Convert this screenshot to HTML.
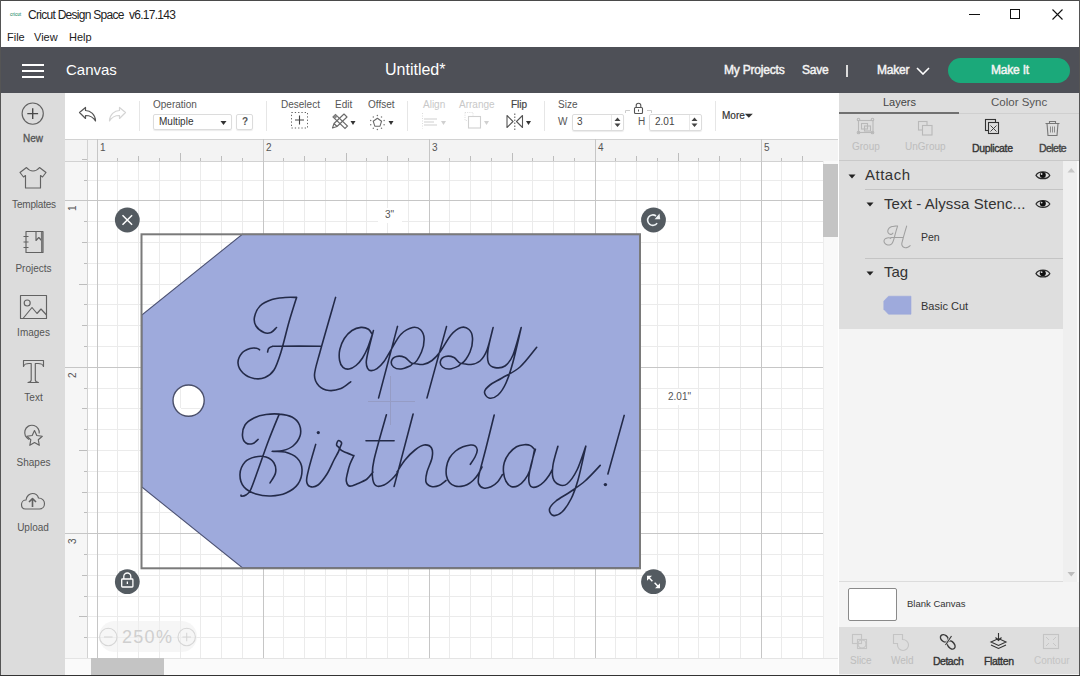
<!DOCTYPE html>
<html><head><meta charset="utf-8">
<style>
*{box-sizing:border-box;margin:0;padding:0}
html,body{width:1080px;height:676px;overflow:hidden;background:#fff;font-family:"Liberation Sans",sans-serif;position:relative}
.a{position:absolute}
.t{position:absolute;white-space:nowrap;line-height:1}
</style></head><body>
<!-- title bar -->
<svg class="a" style="left:8px;top:10px" width="16" height="8" viewBox="0 0 16 8"><text x="2" y="5.8" font-family="Liberation Sans" font-size="5.2" font-weight="bold" fill="#4a9e84" textLength="11" lengthAdjust="spacingAndGlyphs">cricut</text></svg>
<div class="t" id="ttl" style="left:28px;top:8.5px;font-size:12px;color:#222;letter-spacing:-0.72px">Cricut Design Space&nbsp; v6.17.143</div>
<div class="t" style="left:7px;top:32px;font-size:11px;color:#222">File</div>
<div class="t" style="left:34px;top:32px;font-size:11px;color:#222">View</div>
<div class="t" style="left:69px;top:32px;font-size:11px;color:#222">Help</div>
<div class="a" style="left:969px;top:14px;width:11px;height:1px;background:#111"></div>
<div class="a" style="left:1010px;top:9px;width:10px;height:10px;border:1px solid #111"></div>
<svg class="a" style="left:1052px;top:9px" width="11" height="11" viewBox="0 0 11 11"><path d="M0.5 0.5L10.5 10.5M10.5 0.5L0.5 10.5" stroke="#111" stroke-width="1.1"/></svg>

<!-- header -->
<div class="a" style="left:1px;top:47px;width:1078px;height:46px;background:#4e5057"></div>
<div class="a" style="left:22px;top:64px;width:22px;height:2px;background:#fff"></div>
<div class="a" style="left:22px;top:70px;width:22px;height:2px;background:#fff"></div>
<div class="a" style="left:22px;top:76px;width:22px;height:2px;background:#fff"></div>
<div class="t" style="left:66px;top:62px;font-size:15px;color:#fff">Canvas</div>
<div class="t" style="left:385px;top:62px;font-size:16px;color:#fff">Untitled*</div>
<div class="t" style="left:724px;top:64px;font-size:12px;color:#f4f4f4;-webkit-text-stroke:0.45px #f4f4f4;letter-spacing:-0.2px">My Projects</div>
<div class="t" style="left:802px;top:64px;font-size:12px;color:#f4f4f4;-webkit-text-stroke:0.45px #f4f4f4;letter-spacing:-0.2px">Save</div>
<div class="a" style="left:846px;top:65px;width:2px;height:12px;background:#dcdcdc"></div>
<div class="t" style="left:877px;top:64px;font-size:12px;color:#f4f4f4;-webkit-text-stroke:0.45px #f4f4f4;letter-spacing:-0.2px">Maker</div>
<svg class="a" style="left:916px;top:67px" width="14" height="8" viewBox="0 0 14 8"><path d="M1 1L7 7L13 1" stroke="#fff" stroke-width="1.6" fill="none"/></svg>
<div class="a" style="left:948px;top:58px;width:122px;height:25px;border-radius:12.5px;background:#1ba97a"></div>
<div class="t" style="left:991px;top:64px;font-size:12px;color:#f4f4f4;-webkit-text-stroke:0.45px #f4f4f4;letter-spacing:-0.2px">Make It</div>

<!-- sidebar -->
<div class="a" style="left:1px;top:93px;width:64px;height:583px;background:#dcdcdc"></div>
<svg class="a" style="left:0;top:93px" width="65" height="450" viewBox="0 93 65 450" fill="none" stroke="#626262" stroke-width="1.15" stroke-linejoin="round">
<circle cx="32.7" cy="113.6" r="10.6"/>
<path d="M32.7 108.2V119M27.3 113.6H38.1" stroke="#4a4a4a" stroke-width="1.4"/>
<path d="M20 172.5L26.5 167.5C28.5 170 31 171 33 171C35 171 37.5 170 39.5 167.5L46 172.5L42.5 177L40.5 175.5V188H25.5V175.5L23.5 177Z"/>
<rect x="26" y="231.5" width="17" height="21"/>
<path d="M23.5 236.5H28.5M23.5 242H28.5M23.5 247.5H28.5"/>
<path d="M36 231.5V240.5L38.8 237.5L41.5 240.5V231.5" />
<rect x="41" y="232" width="1.8" height="20" fill="#777" stroke="none"/>
<rect x="20.5" y="295.5" width="26" height="23"/>
<circle cx="27.2" cy="303" r="3"/>
<path d="M23 318.5L32 307.5L37 313.5L41 309L46.5 315"/>
<path d="M23.5 360.5H43.5V366.5C42.5 364 41.5 363.5 38 363.5H35.3V380C35.3 381.5 36 382 38.5 382.5H28C30.5 382 31.2 381.5 31.2 380V363.5H29C25.5 363.5 24.5 364 23.5 366.5Z"/>
<path d="M29 439.5C25.5 437.5 24.2 434 25 430.5C26 426.5 30 424.5 34 425.5C37.5 426.5 39.8 430 39.2 433.5"/>
<path d="M34.5 430.5L36.8 435.5L42.3 436.2L38.3 439.8L39.3 445.3L34.5 442.6L29.8 445.3L30.8 439.8L26.7 436.2L32.2 435.5Z"/>
<path d="M25.5 509C22.5 509 21.5 506.5 21.5 504.5C21.5 502 23.5 500 26 500C26.5 496 29.5 493.5 32.5 493.5C35.5 493.5 37.8 495.5 38.5 498C42 498 44.5 500.5 44.5 503.5C44.5 506.5 42.5 509 39.5 509Z"/>
<path d="M32.5 507V498.5M29 502L32.5 498.5L36 502" stroke-width="1.6"/>
</svg>
<div class="t" style="left:33px;top:134px;font-size:10px;color:#555;-webkit-text-stroke:0.3px #555;transform:translateX(-50%)">New</div>
<div class="t" style="left:34px;top:200px;font-size:10px;color:#555;letter-spacing:-0.2px;transform:translateX(-50%)">Templates</div>
<div class="t" style="left:33.5px;top:264px;font-size:10px;color:#555;transform:translateX(-50%)">Projects</div>
<div class="t" style="left:33.5px;top:328px;font-size:10px;color:#555;transform:translateX(-50%)">Images</div>
<div class="t" style="left:33.5px;top:393px;font-size:10px;color:#555;transform:translateX(-50%)">Text</div>
<div class="t" style="left:33.5px;top:458px;font-size:10px;color:#555;transform:translateX(-50%)">Shapes</div>
<div class="t" style="left:33px;top:522.5px;font-size:10px;color:#555;transform:translateX(-50%)">Upload</div>

<!-- toolbar -->
<div class="a" style="left:65px;top:93px;width:774px;height:46px;background:#fff"></div>
<svg class="a" style="left:70px;top:100px" width="70" height="30" viewBox="70 100 70 30">
<path d="M79.5 112.5L85.5 107.5V110.5C90.5 110.5 95.5 114.5 95.5 121C93.5 117.5 90 115.5 85.5 115.5V118.5Z" fill="none" stroke="#555" stroke-width="1.2" stroke-linejoin="round"/>
<path d="M125.5 112.5L119.5 107.5V110.5C114.5 110.5 109.5 114.5 109.5 121C111.5 117.5 115 115.5 119.5 115.5V118.5Z" fill="none" stroke="#d4d4d4" stroke-width="1.2" stroke-linejoin="round"/>
</svg>
<div class="a" style="left:139px;top:101px;width:1px;height:30px;background:#e6e6e6"></div>
<div class="t" style="left:153px;top:100px;font-size:10px;color:#555">Operation</div>
<div class="a" style="left:153px;top:114px;width:79px;height:16px;border:1px solid #dcdcdc;border-radius:2px;box-shadow:0 1px 1px rgba(0,0,0,.08)"></div>
<div class="t" style="left:159px;top:117px;font-size:10px;color:#333">Multiple</div>
<svg class="a" style="left:220px;top:120px" width="7" height="6" viewBox="0 0 7 6"><path d="M0.5 1H6.5L3.5 5Z" fill="#333"/></svg>
<div class="a" style="left:236px;top:114px;width:17px;height:16px;border:1px solid #dcdcdc;border-radius:2px;box-shadow:0 1px 1px rgba(0,0,0,.08)"></div>
<div class="t" style="left:242px;top:117px;font-size:10px;color:#555;font-weight:bold">?</div>
<div class="a" style="left:266px;top:101px;width:1px;height:30px;background:#e6e6e6"></div>

<div class="t" style="left:281px;top:100px;font-size:10px;color:#555">Deselect</div>
<svg class="a" style="left:289px;top:110px" width="22" height="20" viewBox="289 110 22 20">
<rect x="291.5" y="112.5" width="16" height="15.5" fill="none" stroke="#666" stroke-width="1" stroke-dasharray="1.3 2"/>
<path d="M299.5 115.5V124.5M295 120H304" stroke="#444" stroke-width="1.1"/>
</svg>
<div class="t" style="left:335px;top:100px;font-size:10px;color:#555">Edit</div>
<svg class="a" style="left:330px;top:111px" width="28" height="20" viewBox="330 111 28 20">
<path d="M332.5 128L334 123.5L344 114L347 117L337 126.5Z M334 123.5L337 126.5" fill="none" stroke="#6a6a6a" stroke-width="1.1" stroke-linejoin="round"/>
<path d="M333 117L335.5 114.5L347.5 126L345 128.5Z" fill="none" stroke="#6a6a6a" stroke-width="1.1"/><path d="M333.2 116.8L335.5 114.5L337.5 116.5L335.2 118.8Z" fill="#8a8a8a"/>
<path d="M350.5 121H355.5L353 125Z" fill="#333"/>
</svg>
<div class="t" style="left:368px;top:100px;font-size:10px;color:#555">Offset</div>
<svg class="a" style="left:368px;top:112px" width="28" height="20" viewBox="368 112 28 20">
<path d="M377.4 118.2L381.6 121.2L380.0 126.2L374.8 126.2L373.2 121.2Z" fill="none" stroke="#6a6a6a" stroke-width="1.1" stroke-linejoin="round"/>
<circle cx="377.4" cy="115.6" r="0.75" fill="#777"/><circle cx="381.5" cy="116.9" r="0.75" fill="#777"/><circle cx="384.1" cy="120.4" r="0.75" fill="#777"/><circle cx="384.1" cy="124.8" r="0.75" fill="#777"/><circle cx="381.5" cy="128.3" r="0.75" fill="#777"/><circle cx="377.4" cy="129.6" r="0.75" fill="#777"/><circle cx="373.3" cy="128.3" r="0.75" fill="#777"/><circle cx="370.7" cy="124.8" r="0.75" fill="#777"/><circle cx="370.7" cy="120.4" r="0.75" fill="#777"/><circle cx="373.3" cy="116.9" r="0.75" fill="#777"/>
<path d="M388.5 121H393.5L391 125Z" fill="#333"/>
</svg>
<div class="a" style="left:407px;top:101px;width:1px;height:30px;background:#e6e6e6"></div>

<div class="t" style="left:423px;top:100px;font-size:10px;color:#c8c8c8">Align</div>
<svg class="a" style="left:420px;top:111px" width="28" height="20" viewBox="420 111 28 20">
<path d="M422.5 113V128.5" stroke="#ddd" stroke-width="1" stroke-dasharray="1 1.5"/>
<path d="M424 119H437M424 122H434M424 125H437" stroke="#d0d0d0" stroke-width="1.2"/>
<path d="M441 121H446L443.5 125Z" fill="#d0d0d0"/>
</svg>
<div class="t" style="left:459px;top:100px;font-size:10px;color:#c8c8c8">Arrange</div>
<svg class="a" style="left:462px;top:110px" width="30" height="20" viewBox="462 110 30 20">
<path d="M465 112.5H473V116M465 112.5V120.5H468" fill="none" stroke="#ddd" stroke-width="1" stroke-dasharray="1 1.2"/>
<rect x="468.5" y="116.5" width="12" height="11.5" fill="none" stroke="#d0d0d0" stroke-width="1.1"/>
<path d="M484 121H489L486.5 125Z" fill="#d0d0d0"/>
</svg>
<div class="t" style="left:511px;top:100px;font-size:10px;color:#444;-webkit-text-stroke:0.2px #444">Flip</div>
<svg class="a" style="left:504px;top:111px" width="30" height="21" viewBox="504 111 30 21">
<path d="M507 115.5L513 121.5L507 127.5Z M522.5 115.5L516.5 121.5L522.5 127.5Z" fill="none" stroke="#555" stroke-width="1.1" stroke-linejoin="round"/>
<path d="M514.8 113.5V130" stroke="#555" stroke-width="1" stroke-dasharray="1.5 1.5"/>
<path d="M526 121H531L528.5 125Z" fill="#333"/>
</svg>
<div class="a" style="left:544px;top:101px;width:1px;height:30px;background:#e6e6e6"></div>

<div class="t" style="left:558px;top:100px;font-size:10px;color:#555">Size</div>
<div class="t" style="left:558px;top:117px;font-size:10px;color:#555">W</div>
<div class="a" style="left:572px;top:114px;width:52px;height:17px;border:1px solid #dcdcdc;border-radius:2px;box-shadow:0 1px 1px rgba(0,0,0,.08)"></div>
<div class="a" style="left:611px;top:115px;width:1px;height:15px;background:#e8e8e8"></div>
<div class="t" style="left:577px;top:117px;font-size:10px;color:#444">3</div>
<svg class="a" style="left:613px;top:116px" width="9" height="13" viewBox="0 0 9 13"><path d="M1.5 5H7.5L4.5 1.5Z M1.5 7.5H7.5L4.5 11Z" fill="#444"/></svg>
<svg class="a" style="left:624px;top:102px" width="29" height="12" viewBox="624 102 29 12">
<path d="M625.5 113V110.5H630M647 110.5H651.5V113" fill="none" stroke="#ccc" stroke-width="1"/>
<rect x="634.5" y="107.5" width="8" height="6" rx="1" fill="none" stroke="#555" stroke-width="1.1"/>
<path d="M636.2 107.5V105.5A2.3 2.3 0 0 1 640.8 105.5V107.5" fill="none" stroke="#555" stroke-width="1.1"/>
<rect x="638" y="109.5" width="1" height="2" fill="#555"/>
</svg>
<div class="t" style="left:638px;top:117px;font-size:10px;color:#555">H</div>
<div class="a" style="left:649px;top:114px;width:53px;height:17px;border:1px solid #dcdcdc;border-radius:2px;box-shadow:0 1px 1px rgba(0,0,0,.08)"></div>
<div class="a" style="left:689px;top:115px;width:1px;height:15px;background:#e8e8e8"></div>
<div class="t" style="left:655px;top:117px;font-size:10px;color:#444">2.01</div>
<svg class="a" style="left:690px;top:116px" width="9" height="13" viewBox="0 0 9 13"><path d="M1.5 5H7.5L4.5 1.5Z M1.5 7.5H7.5L4.5 11Z" fill="#444"/></svg>
<div class="a" style="left:715px;top:101px;width:1px;height:30px;background:#e6e6e6"></div>
<div class="t" style="left:722px;top:111px;font-size:10px;color:#333;-webkit-text-stroke:0.2px #333">More</div>
<svg class="a" style="left:744px;top:113px" width="10" height="6" viewBox="0 0 10 6"><path d="M0.8 0.8H8.8L4.8 4.8Z" fill="#333"/></svg>

<!-- canvas -->
<div class="a" style="left:65px;top:139px;width:774px;height:537px;background:#fff"></div>
<svg class="a" style="left:0;top:0" width="1080" height="676" viewBox="0 0 1080 676" shape-rendering="crispEdges">
<rect x="65" y="139" width="773" height="22" fill="#f3f3f3"/>
<rect x="65" y="161" width="22" height="497" fill="#f6f6f6"/>
<path d="M117.5 161V658 M138.5 161V658 M159.5 161V658 M180.5 161V658 M200.5 161V658 M221.5 161V658 M242.5 161V658 M283.5 161V658 M304.5 161V658 M325.5 161V658 M346.5 161V658 M366.5 161V658 M387.5 161V658 M408.5 161V658 M449.5 161V658 M470.5 161V658 M491.5 161V658 M512.5 161V658 M532.5 161V658 M553.5 161V658 M574.5 161V658 M615.5 161V658 M636.5 161V658 M657.5 161V658 M678.5 161V658 M698.5 161V658 M719.5 161V658 M740.5 161V658 M781.5 161V658 M802.5 161V658 M87 180.5H823 M87 221.5H823 M87 242.5H823 M87 263.5H823 M87 284.5H823 M87 304.5H823 M87 325.5H823 M87 346.5H823 M87 388.5H823 M87 408.5H823 M87 429.5H823 M87 450.5H823 M87 471.5H823 M87 492.5H823 M87 512.5H823 M87 554.5H823 M87 575.5H823 M87 596.5H823 M87 616.5H823 M87 637.5H823" stroke="#ebebeb" stroke-width="1"/>
<path d="M117.5 158V161 M138.5 156V161 M159.5 158V161 M180.5 153V161 M200.5 158V161 M221.5 156V161 M242.5 158V161 M283.5 158V161 M304.5 156V161 M325.5 158V161 M346.5 153V161 M366.5 158V161 M387.5 156V161 M408.5 158V161 M449.5 158V161 M470.5 156V161 M491.5 158V161 M512.5 153V161 M532.5 158V161 M553.5 156V161 M574.5 158V161 M615.5 158V161 M636.5 156V161 M657.5 158V161 M678.5 153V161 M698.5 158V161 M719.5 156V161 M740.5 158V161 M781.5 158V161 M802.5 156V161 M84 180.5H87 M84 221.5H87 M82 242.5H87 M84 263.5H87 M79 284.5H87 M84 304.5H87 M82 325.5H87 M84 346.5H87 M84 388.5H87 M82 408.5H87 M84 429.5H87 M79 450.5H87 M84 471.5H87 M82 492.5H87 M84 512.5H87 M84 554.5H87 M82 575.5H87 M84 596.5H87 M79 616.5H87 M84 637.5H87 M82 159.5H87" stroke="#bdbdbd" stroke-width="1"/>
<path d="M65 139.5H838M65 161.5H838M87.5 139V658" stroke="#d2d2d2" stroke-width="1"/>
<path d="M97.5 139V658 M263.5 139V658 M429.5 139V658 M595.5 139V658 M761.5 139V658 M65 200.5H823 M65 367.5H823 M65 533.5H823" stroke="#c6c6c6" stroke-width="1"/>
</svg>
<div class="t" style="left:100px;top:143px;font-size:10px;color:#555">1</div>
<div class="t" style="left:266px;top:143px;font-size:10px;color:#555">2</div>
<div class="t" style="left:432px;top:143px;font-size:10px;color:#555">3</div>
<div class="t" style="left:598px;top:143px;font-size:10px;color:#555">4</div>
<div class="t" style="left:764px;top:143px;font-size:10px;color:#555">5</div>
<div class="t" style="left:68px;top:211px;font-size:10px;color:#555;transform:rotate(-90deg);transform-origin:0 0;">1</div>
<div class="t" style="left:68px;top:378px;font-size:10px;color:#555;transform:rotate(-90deg);transform-origin:0 0;">2</div>
<div class="t" style="left:68px;top:544px;font-size:10px;color:#555;transform:rotate(-90deg);transform-origin:0 0;">3</div>

<!-- tag -->
<svg class="a" style="left:0;top:0" width="1080" height="676" viewBox="0 0 1080 676">
<path d="M242.3 234.3H640V567.7H242.3L141.8 487V315Z" fill="#9eaadc" stroke="#4d5374" stroke-width="1.1"/>
<circle cx="188.6" cy="400.6" r="15.6" fill="#fff" stroke="#4a4f6a" stroke-width="1.4"/>
<rect x="141.5" y="234.3" width="498.5" height="334" fill="none" stroke="#7a7a7a" stroke-width="2"/>
</svg>
<!-- hole grid lines (white inside hole shows grid) -->
<svg class="a" style="left:0;top:0" width="1080" height="676" viewBox="0 0 1080 676" shape-rendering="crispEdges">
<path d="M180.5 389V408M181 408.5H201" stroke="#ececec" stroke-width="1"/>
</svg>
<div class="a" style="left:378px;top:208px;width:24px;height:15px;background:#fff"></div>
<div class="t" style="left:385px;top:210px;font-size:10px;color:#555">3"</div>
<div class="a" style="left:661px;top:389px;width:36px;height:16px;background:#fff"></div>
<div class="t" style="left:668px;top:392px;font-size:10px;color:#555">2.01"</div>
<!-- handles -->
<svg class="a" style="left:0;top:0" width="1080" height="676" viewBox="0 0 1080 676">
<circle cx="127.3" cy="220" r="12.4" fill="#545b61"/>
<path d="M122.5 215.2L132.1 224.8M132.1 215.2L122.5 224.8" stroke="#fff" stroke-width="1.5"/>
<circle cx="653.5" cy="220" r="12.4" fill="#545b61"/>
<path d="M657.1 223.1A5.2 5.2 0 1 1 656 216" fill="none" stroke="#eef2f4" stroke-width="1.6"/>
<path d="M659.5 213.6L660.2 219.3L654.6 219.3Z" fill="#eef2f4"/>
<circle cx="127.3" cy="581.7" r="12.4" fill="#545b61"/>
<rect x="121.7" y="579" width="11.2" height="8" rx="0.8" fill="none" stroke="#fff" stroke-width="1.3"/>
<path d="M123.8 579V576.5A3.5 3.5 0 0 1 130.8 576.5V579" fill="none" stroke="#fff" stroke-width="1.3"/>
<rect x="126.7" y="581.5" width="1.3" height="2.5" fill="#fff"/>
<circle cx="653.5" cy="581.7" r="12.4" fill="#545b61"/>
<path d="M648 576.7L652.4 581.2M659 587.2L654.6 582.8" stroke="#fff" stroke-width="1.5"/>
<path d="M647 575.7H652L647 580.7Z M660 588.2H655L660 583.2Z" fill="#fff"/>
</svg>

<svg class="a" style="left:0;top:0" width="1080" height="676" viewBox="0 0 1080 676" shape-rendering="crispEdges"><path d="M368 401.5H415M390.5 376V425" stroke="#8a8ca8" stroke-opacity="0.45" stroke-width="1"/></svg>
<!-- text -->
<svg class="a" style="left:0;top:0" width="1080" height="676" viewBox="0 0 1080 676"><path d="M276.5 327.5C275.6 328.3 273.1 331.7 271.0 332.5C268.9 333.3 266.5 333.6 264.0 332.5C261.5 331.4 257.6 328.6 256.0 326.0C254.4 323.4 253.8 320.3 254.5 317.0C255.2 313.7 257.1 308.9 260.0 306.0C262.9 303.1 267.8 300.9 272.0 299.5C276.2 298.1 280.9 297.9 285.0 297.5C289.1 297.1 294.7 297.4 296.6 297.4 M296.6 297.4C295.3 301.5 291.6 312.9 289.0 322.0C286.4 331.1 283.5 344.0 281.0 352.0C278.5 360.0 276.7 365.8 274.0 370.0C271.3 374.2 268.3 376.1 265.0 377.5C261.7 378.9 257.7 379.2 254.0 378.5C250.3 377.8 245.7 375.6 243.0 373.0C240.3 370.4 238.2 366.3 238.0 363.0C237.8 359.7 240.0 355.4 242.0 353.0C244.0 350.6 247.6 349.3 250.0 348.5C252.4 347.7 254.9 348.0 256.5 348.2C258.1 348.4 259.0 349.5 259.5 349.8 M267.6 352.0C267.8 351.4 267.9 349.3 268.6 348.4C269.3 347.5 270.4 346.9 272.0 346.5C273.6 346.1 269.9 346.2 278.0 346.2C286.1 346.1 313.4 346.2 320.5 346.2 M335.6 297.4C333.0 306.5 323.5 339.1 320.0 352.0C316.5 364.9 314.7 369.3 314.5 375.0C314.3 380.7 316.6 383.4 319.0 386.0C321.4 388.6 325.3 390.1 329.0 390.5C332.7 390.9 337.4 389.9 341.0 388.5C344.6 387.1 349.1 382.9 350.7 381.8 M372.3 334.5C371.7 333.6 370.4 330.5 368.5 329.3C366.6 328.1 363.8 327.2 361.0 327.4C358.2 327.6 354.8 328.6 352.0 330.5C349.2 332.4 346.3 335.3 344.3 338.5C342.3 341.7 340.6 345.8 339.8 349.5C339.0 353.2 339.1 357.5 339.6 360.5C340.1 363.5 341.4 365.9 343.0 367.3C344.6 368.7 346.8 369.3 349.0 369.0C351.2 368.7 353.8 367.3 356.0 365.5C358.2 363.7 360.5 361.1 362.5 358.0C364.5 354.9 366.4 350.9 368.0 347.0C369.6 343.1 371.6 336.6 372.3 334.5 M373.4 330.6C372.7 333.5 370.2 342.9 369.0 348.0C367.8 353.1 366.5 358.1 366.3 361.5C366.1 364.9 366.8 366.8 367.6 368.3C368.4 369.8 369.4 370.6 371.0 370.6C372.6 370.7 374.8 370.1 377.0 368.6C379.2 367.1 381.6 364.7 384.0 361.5C386.4 358.3 388.5 353.9 391.3 349.3C394.1 344.8 397.4 337.8 401.0 334.2C404.6 330.6 409.3 328.2 412.6 327.5C415.9 326.8 418.7 327.9 420.6 329.8C422.5 331.7 424.0 334.9 424.1 338.6C424.2 342.3 423.3 347.9 421.5 352.0C419.7 356.1 416.2 362.6 413.5 363.5C410.8 364.4 407.8 358.7 405.0 357.5C402.2 356.3 398.8 355.9 396.5 356.5C394.2 357.1 392.0 359.2 391.5 361.0C391.0 362.8 391.9 365.7 393.5 367.0C395.1 368.3 398.2 369.2 401.0 369.0C403.8 368.8 407.9 366.9 410.0 366.0C412.1 365.1 411.3 363.8 413.5 363.5C415.7 363.2 419.9 365.0 423.0 364.5C426.1 364.0 429.2 362.6 432.0 360.5C434.8 358.4 436.8 356.2 440.0 352.0C443.2 347.8 447.5 339.1 451.0 335.0C454.5 330.9 458.0 328.4 461.0 327.5C464.0 326.6 467.1 327.8 469.0 329.5C470.9 331.2 472.3 334.2 472.5 338.0C472.7 341.8 471.8 347.8 470.0 352.0C468.2 356.2 464.2 362.6 461.5 363.5C458.8 364.4 456.7 358.7 454.0 357.5C451.3 356.3 447.8 355.9 445.5 356.5C443.2 357.1 441.0 359.2 440.5 361.0C440.0 362.8 440.9 365.7 442.5 367.0C444.1 368.3 447.3 369.2 450.0 369.0C452.7 368.8 456.6 366.9 458.5 366.0C460.4 365.1 459.4 363.8 461.5 363.5C463.6 363.2 467.9 364.9 471.0 364.5C474.1 364.1 477.3 363.4 480.0 361.0C482.7 358.6 484.8 355.6 487.0 350.0C489.2 344.4 492.1 331.3 493.1 327.6 M397.5 326.4L378.6 397.9 M446.5 326.6L427.0 397.9 M493.1 327.6C492.2 331.3 488.8 344.1 488.0 350.0C487.2 355.9 487.3 360.1 488.5 363.0C489.7 365.9 492.2 367.1 495.0 367.6C497.8 368.1 502.0 368.1 505.0 366.0C508.0 363.9 510.3 361.4 513.0 355.0C515.7 348.6 519.8 332.2 521.2 327.6 M521.2 327.6C519.8 333.3 515.5 352.8 513.0 362.0C510.5 371.2 508.5 377.5 506.0 383.0C503.5 388.5 500.8 392.5 498.0 395.0C495.2 397.5 491.2 398.5 489.0 398.0C486.8 397.5 484.3 394.2 484.5 392.0C484.7 389.8 487.1 387.3 490.0 385.0C492.9 382.7 497.0 381.0 502.0 378.0C507.0 375.0 514.2 372.1 520.0 367.0C525.8 361.9 533.9 350.6 536.7 347.3 M258.1 439.4C257.2 440.1 255.0 442.9 253.0 443.5C251.0 444.1 247.8 444.2 246.0 443.0C244.2 441.8 242.7 439.0 242.5 436.0C242.3 433.0 243.1 428.0 245.0 425.0C246.9 422.0 250.5 419.8 254.0 418.0C257.5 416.2 261.8 415.1 266.0 414.5C270.2 413.9 274.9 413.7 279.2 414.1C283.5 414.5 288.6 415.2 292.0 417.0C295.4 418.8 298.2 421.8 299.5 425.0C300.8 428.2 301.1 432.5 300.0 436.0C298.9 439.5 295.8 443.6 293.0 446.0C290.2 448.4 286.5 449.6 283.0 450.5C279.5 451.4 271.9 451.1 272.2 451.4C272.5 451.6 280.9 450.9 285.0 452.0C289.1 453.1 294.2 455.2 297.0 458.0C299.8 460.8 301.8 464.7 302.0 469.0C302.2 473.3 300.7 480.0 298.0 484.0C295.3 488.0 290.5 491.0 286.0 493.0C281.5 495.0 276.0 495.8 271.0 496.0C266.0 496.2 260.5 495.5 256.0 494.0C251.5 492.5 246.7 490.3 244.0 487.0C241.3 483.7 239.8 478.2 240.0 474.0C240.2 469.8 242.5 464.8 245.0 462.0C247.5 459.2 251.5 457.8 255.0 457.0C258.5 456.2 262.8 456.0 266.0 457.0C269.2 458.0 272.4 460.3 274.0 463.0C275.6 465.7 276.2 469.7 275.5 473.0C274.8 476.3 270.9 481.3 270.0 483.0 M279.2 414.1C277.3 418.8 271.5 432.7 268.0 442.0C264.5 451.3 260.9 462.0 258.0 470.0C255.1 478.0 252.5 485.8 250.5 490.0C248.5 494.2 247.5 493.9 246.0 495.0C244.5 496.1 242.3 496.3 241.5 496.3C240.7 496.3 241.1 495.4 241.0 495.2 M315.7 444.4C314.6 448.3 310.5 461.9 309.0 468.0C307.5 474.1 306.4 477.8 306.6 480.9C306.8 484.0 308.1 485.8 310.0 486.5C311.9 487.2 315.2 487.1 318.0 485.0C320.8 482.9 324.3 478.2 327.0 474.0C329.7 469.8 331.9 464.2 334.0 460.0C336.1 455.8 339.0 451.5 339.4 449.0C339.8 446.5 336.8 446.6 336.6 445.2C336.4 443.8 337.5 441.0 338.3 440.6C339.1 440.2 341.3 441.6 341.6 443.0C341.9 444.4 339.2 447.6 340.0 449.2C340.8 450.8 344.3 451.7 346.6 452.8C348.9 453.9 352.7 455.1 353.9 455.6 M353.9 455.6C353.2 457.0 351.1 461.1 350.0 464.0C348.9 466.9 348.1 470.2 347.5 473.0C346.9 475.8 345.9 478.8 346.3 481.0C346.7 483.2 347.8 485.7 349.7 486.1C351.6 486.5 355.1 484.7 358.0 483.5C360.9 482.3 364.5 480.9 367.0 479.0C369.5 477.1 372.0 473.2 373.0 472.0 M386.4 414.8C384.3 422.3 376.3 449.6 374.0 460.0C371.7 470.4 372.2 472.7 372.5 477.0C372.8 481.3 374.1 484.4 376.0 485.7C377.9 487.0 381.3 486.1 384.0 485.0C386.7 483.9 389.7 481.2 392.0 479.0C394.3 476.8 397.0 473.2 398.0 472.0 M366.0 440.8L394.1 440.8 M413.1 414.0L394.1 486.4 M397.0 472.0C398.3 470.0 402.0 463.7 405.0 460.0C408.0 456.3 411.8 452.5 415.0 450.0C418.2 447.5 421.2 445.3 424.0 445.0C426.8 444.7 430.2 445.8 431.5 448.0C432.8 450.2 432.8 454.0 432.0 458.0C431.2 462.0 428.0 468.0 427.0 472.0C426.0 476.0 425.3 479.6 426.0 482.0C426.7 484.4 429.2 485.8 431.4 486.4C433.6 487.0 436.6 486.5 439.0 485.5C441.4 484.5 444.8 481.3 446.0 480.5 M470.3 464.3C471.1 463.1 473.8 459.4 475.0 457.0C476.2 454.6 477.3 451.9 477.3 450.0C477.3 448.1 476.1 446.6 475.0 445.8C473.9 445.0 472.5 444.8 470.5 445.0C468.5 445.2 465.5 445.8 463.0 446.8C460.5 447.8 457.9 449.1 455.6 451.0C453.4 452.9 451.0 455.3 449.5 458.0C448.0 460.7 447.0 464.0 446.5 467.0C446.0 470.0 446.0 473.4 446.5 476.0C447.0 478.6 448.1 480.8 449.5 482.5C450.9 484.2 453.1 485.4 455.0 486.0C456.9 486.6 459.0 486.6 461.0 486.4C463.0 486.2 465.0 485.8 467.0 484.8C469.0 483.8 471.2 482.2 473.0 480.5C474.8 478.8 476.5 476.8 478.0 474.5C479.5 472.2 481.3 468.2 482.0 467.0 M494.2 415.0C492.8 420.5 488.2 439.3 486.0 448.0C483.8 456.7 482.2 462.3 481.0 467.0C479.8 471.7 479.2 473.2 478.8 476.0C478.4 478.8 477.8 481.6 478.6 483.6C479.4 485.6 481.5 487.5 483.6 488.0C485.7 488.5 488.7 487.8 491.0 486.8C493.3 485.8 495.6 484.1 497.5 482.0C499.4 479.9 501.7 475.8 502.5 474.5 M534.6 449.5C533.9 448.9 532.2 446.4 530.5 445.6C528.8 444.8 526.6 444.5 524.3 444.7C522.0 444.9 519.0 445.3 516.5 446.8C514.0 448.3 511.0 450.9 509.0 453.5C507.0 456.1 505.2 459.4 504.3 462.5C503.4 465.6 503.2 468.9 503.5 472.0C503.8 475.1 504.6 478.6 505.8 481.0C507.1 483.4 509.0 485.6 511.0 486.4C513.0 487.2 515.8 486.9 518.0 485.8C520.2 484.7 522.5 482.6 524.5 480.0C526.5 477.4 528.3 475.1 530.0 470.0C531.7 464.9 533.8 452.9 534.6 449.5 M535.4 449.2C534.7 451.8 532.1 460.3 531.0 465.0C529.9 469.7 529.0 474.4 528.8 477.6C528.6 480.9 529.0 482.9 529.6 484.5C530.2 486.1 531.2 487.0 532.6 487.3C534.0 487.6 536.1 487.1 538.0 486.2C539.9 485.3 542.0 483.8 543.8 482.0C545.6 480.2 547.5 477.7 549.0 475.5C550.5 473.3 552.0 470.1 552.6 469.0 M557.9 446.2C557.1 449.3 553.8 459.7 553.0 465.0C552.2 470.3 552.0 474.7 553.0 478.0C554.0 481.3 556.5 483.6 558.8 484.6C561.1 485.6 564.0 486.4 567.0 484.0C570.0 481.6 573.9 476.3 577.0 470.0C580.1 463.7 584.3 450.2 585.8 446.2 M585.8 446.2C584.5 451.8 580.5 471.2 578.0 480.0C575.5 488.8 573.7 493.7 571.0 499.0C568.3 504.3 565.0 509.3 562.0 512.0C559.0 514.7 555.1 515.9 553.0 515.4C550.9 514.9 549.0 511.4 549.5 509.0C550.0 506.6 552.6 503.8 556.0 501.0C559.4 498.2 565.2 495.3 570.0 492.0C574.8 488.7 580.0 485.4 585.0 481.0C590.0 476.6 597.7 468.0 600.2 465.4 M624.2 415.4L607.9 474.0" fill="none" stroke="#232a48" stroke-width="1.6" stroke-linecap="round" stroke-linejoin="round"/><circle cx="318.3" cy="432.6" r="1.6" fill="#232a48"/><circle cx="605.4" cy="484.6" r="1.7" fill="#232a48"/></svg>

<!-- canvas-end -->
<!-- right panel -->
<div class="a" style="left:839px;top:93px;width:240px;height:583px;background:#f4f4f4"></div>
<div class="a" style="left:839px;top:93px;width:240px;height:68px;background:#dedede"></div>
<div class="a" style="left:839px;top:113px;width:240px;height:1px;background:#cfcfcf"></div>
<div class="a" style="left:839px;top:112px;width:120px;height:2px;background:#707070"></div>
<div class="a" style="left:839px;top:160px;width:240px;height:1px;background:#c9c9c9"></div>
<div class="t" style="left:883px;top:97px;font-size:11px;color:#444">Layers</div>
<div class="t" style="left:991px;top:97px;font-size:11.5px;color:#555">Color Sync</div>
<svg class="a" style="left:839px;top:114px" width="240" height="46" viewBox="839 114 240 46" fill="none" stroke-width="1.1">
<g stroke="#b9b9b9">
<rect x="858.5" y="120.5" width="14.5" height="12"/>
<rect x="861.5" y="123.5" width="6" height="5.5"/>
<rect x="864.5" y="126" width="6" height="5"/>
<circle cx="858.5" cy="119.5" r="1.3"/><circle cx="872.5" cy="119.5" r="1.3"/><circle cx="858.5" cy="132.5" r="1.3"/><circle cx="872.5" cy="132.5" r="1.3"/>
<rect x="918.5" y="121.5" width="8.5" height="8.5"/>
<rect x="922.5" y="125.5" width="9.5" height="9.5" fill="#dedede"/>
</g>
<g stroke="#333">
<rect x="985.5" y="119.5" width="10" height="11"/>
<rect x="988.5" y="122.5" width="10" height="11" fill="#dedede"/>
<path d="M990.5 125.5L996.5 131.5M996.5 125.5L990.5 131.5" stroke-width="0.9"/>
</g>
<g stroke="#777">
<path d="M1045.5 123.5H1059.5M1049.5 123.5V121.5H1055.5V123.5"/>
<path d="M1047 123.5L1048 135.5H1057L1058 123.5"/>
<path d="M1050.5 126.5V132.5M1052.5 126.5V132.5M1054.5 126.5V132.5" stroke-width="0.8"/>
</g>
</svg>
<div class="t" style="left:852px;top:142px;font-size:10px;color:#bdbdbd">Group</div>
<div class="t" style="left:905px;top:142px;font-size:10px;color:#bdbdbd">UnGroup</div>
<div class="t" style="left:972px;top:143px;font-size:10.5px;color:#333;-webkit-text-stroke:0.35px #333;letter-spacing:-0.35px">Duplicate</div>
<div class="t" style="left:1039px;top:143px;font-size:10.5px;color:#444;-webkit-text-stroke:0.35px #444;letter-spacing:-0.55px">Delete</div>

<!-- layers list -->
<div class="a" style="left:839px;top:161px;width:224px;height:168px;background:#dedede"></div>
<div class="a" style="left:1063px;top:161px;width:16px;height:421px;background:#efefef;border-right:2px solid #fafafa"></div>
<div class="a" style="left:865px;top:189px;width:198px;height:1px;background:#c4c4c4"></div>
<div class="a" style="left:865px;top:258px;width:198px;height:1px;background:#c4c4c4"></div>
<svg class="a" style="left:839px;top:161px" width="240" height="430" viewBox="839 161 240 430">
<path d="M848.5 174.5H855.5L852 178.5Z M866.5 202.5H873.5L870 206.5Z M866.5 271.5H873.5L870 275.5Z" fill="#222"/>
<g>
<path d="M1036 175.4C1038.5 170.8 1047.5 170.8 1049.8 175.4C1047.5 179.8 1038.5 179.8 1036 175.4Z" fill="none" stroke="#2a2a2a" stroke-width="1.2"/><circle cx="1042.8" cy="175.0" r="3" fill="#111"/><circle cx="1041.6" cy="174.0" r="0.9" fill="#ddd"/>
<path d="M1036 204.0C1038.5 199.4 1047.5 199.4 1049.8 204.0C1047.5 208.4 1038.5 208.4 1036 204.0Z" fill="none" stroke="#2a2a2a" stroke-width="1.2"/><circle cx="1042.8" cy="203.6" r="3" fill="#111"/><circle cx="1041.6" cy="202.6" r="0.9" fill="#ddd"/>
<path d="M1036 273.6C1038.5 269.0 1047.5 269.0 1049.8 273.6C1047.5 278.0 1038.5 278.0 1036 273.6Z" fill="none" stroke="#2a2a2a" stroke-width="1.2"/><circle cx="1042.8" cy="273.2" r="3" fill="#111"/><circle cx="1041.6" cy="272.2" r="0.9" fill="#ddd"/>
</g>
<path d="M1067.5 172.5H1075L1071.3 168Z" fill="#c8c8c8"/>
<path d="M1067.5 572H1075L1071.3 576.5Z" fill="#bdbdbd"/>
<path d="M888.5 296.2H911V314.2H888.5L883.8 309.3V301.1Z" fill="#9eaadc" stroke="#9eaadc" stroke-width="0.6" stroke-linejoin="round"/>
</svg>
<div class="t" style="left:865px;top:167px;font-size:15px;color:#333;letter-spacing:0.5px">Attach</div>
<div class="t" style="left:884px;top:196px;font-size:15px;color:#333;letter-spacing:0.1px">Text - Alyssa Stenc...</div>
<svg class="a" style="left:0;top:0" width="1080" height="676" viewBox="0 0 1080 676"><g transform="translate(884 226) scale(0.232) translate(-238 -297)"><path d="M276.5 327.5C275.6 328.3 273.1 331.7 271.0 332.5C268.9 333.3 266.5 333.6 264.0 332.5C261.5 331.4 257.6 328.6 256.0 326.0C254.4 323.4 253.8 320.3 254.5 317.0C255.2 313.7 257.1 308.9 260.0 306.0C262.9 303.1 267.8 300.9 272.0 299.5C276.2 298.1 280.9 297.9 285.0 297.5C289.1 297.1 294.7 297.4 296.6 297.4 M296.6 297.4C295.3 301.5 291.6 312.9 289.0 322.0C286.4 331.1 283.5 344.0 281.0 352.0C278.5 360.0 276.7 365.8 274.0 370.0C271.3 374.2 268.3 376.1 265.0 377.5C261.7 378.9 257.7 379.2 254.0 378.5C250.3 377.8 245.7 375.6 243.0 373.0C240.3 370.4 238.2 366.3 238.0 363.0C237.8 359.7 239.8 355.4 242.0 353.0C244.2 350.6 248.5 349.3 251.5 348.5C254.5 347.7 257.3 347.7 260.0 348.0C262.7 348.3 266.2 350.1 267.5 350.5 M267.5 346.2L320.5 346.2 M335.6 297.4C333.0 306.5 323.5 339.1 320.0 352.0C316.5 364.9 314.7 369.3 314.5 375.0C314.3 380.7 316.6 383.4 319.0 386.0C321.4 388.6 325.3 390.1 329.0 390.5C332.7 390.9 337.4 389.9 341.0 388.5C344.6 387.1 349.1 382.9 350.7 381.8" fill="none" stroke="#a0a0a0" stroke-width="4.6" stroke-linecap="round"/></g></svg>
<div class="t" style="left:921px;top:231.5px;font-size:10.5px;color:#333">Pen</div>
<div class="t" style="left:884px;top:264px;font-size:15px;color:#333">Tag</div>
<div class="t" style="left:921px;top:301px;font-size:11px;color:#333">Basic Cut</div>

<!-- blank canvas -->
<div class="a" style="left:839px;top:581px;width:224px;height:1px;background:#dcdcdc"></div>
<div class="a" style="left:848px;top:588px;width:49px;height:33px;background:#fff;border:1px solid #8a8a8a;border-radius:2px"></div>
<div class="t" style="left:907px;top:599px;font-size:9.5px;color:#333">Blank Canvas</div>

<!-- bottom actions -->
<div class="a" style="left:839px;top:627px;width:240px;height:47px;background:#dedede"></div>
<svg class="a" style="left:839px;top:627px" width="240" height="47" viewBox="839 627 240 47" fill="none" stroke-width="1.1">
<g stroke="#c4c4c4">
<rect x="852.5" y="634.5" width="9" height="9"/><rect x="857.5" y="639.5" width="9" height="9"/>
<circle cx="862" cy="644" r="4"/>
<path d="M893.5 634.5H902.5V639.5C906 639.5 908.5 642 908.5 645C908.5 648 906 650.5 903 650.5C900 650.5 897.5 648 897.5 645V643.5H893.5Z"/>
<rect x="1043.5" y="634.5" width="15" height="14"/>
<path d="M1046 637L1049 640M1056 637L1053 640M1046 646L1049 643M1056 646L1053 643" stroke-width="0.9"/>
</g>
<g stroke="#3a3a3a" stroke-width="1.5">
<ellipse cx="944.3" cy="638.3" rx="4.2" ry="3.2" transform="rotate(40 944.3 638.3)"/>
<ellipse cx="951.2" cy="645" rx="4.6" ry="3.2" transform="rotate(50 951.2 645)"/>
<path d="M952 635.5L945 645.5" stroke="#dedede" stroke-width="2.4"/>
<path d="M951.5 636L945.5 645" stroke-width="1.2"/>
</g>
<g stroke="#333" stroke-width="1.1">
<path d="M998.5 633V640.5M995.5 637.5L998.5 640.5L1001.5 637.5"/>
<path d="M991 642L998.5 638.5L1006 642L998.5 645.5Z"/>
<path d="M991 645L998.5 648.5L1006 645"/>
</g>
</svg>
<div class="t" style="left:850px;top:656px;font-size:10px;color:#bdbdbd">Slice</div>
<div class="t" style="left:891px;top:656px;font-size:10px;color:#bdbdbd">Weld</div>
<div class="t" style="left:933px;top:656px;font-size:10.5px;color:#333;-webkit-text-stroke:0.35px #333;letter-spacing:-0.5px">Detach</div>
<div class="t" style="left:984px;top:656px;font-size:10.5px;color:#333;-webkit-text-stroke:0.35px #333;letter-spacing:-0.35px">Flatten</div>
<div class="t" style="left:1034px;top:656px;font-size:10px;color:#c4c4c4">Contour</div>

<!-- zoom widget & scrollbars -->
<div class="a" style="left:823px;top:161px;width:15px;height:497px;background:#f9f9f9;border-left:1px solid #ededed"></div>
<div class="a" style="left:823px;top:164px;width:15px;height:73px;background:#c4c4c4"></div>
<div class="a" style="left:65px;top:658px;width:773px;height:17px;background:#fafafa;border-top:1px solid #e4e4e4"></div>
<div class="a" style="left:91px;top:658px;width:73px;height:17px;background:#c4c4c4"></div>
<div class="a" style="left:99px;top:621px;width:98px;height:31px;border-radius:15.5px;background:rgba(238,238,238,0.55)"></div>
<svg class="a" style="left:96px;top:621px" width="106" height="31" viewBox="96 621 106 31" fill="none" stroke="#d6d6d6" stroke-width="1.1">
<circle cx="108.3" cy="637" r="8.7"/><path d="M104 637H112.6"/>
<circle cx="186.7" cy="637" r="8.7"/><path d="M182.4 637H191M186.7 632.7V641.3"/>
</svg>
<div class="t" style="left:122px;top:627.5px;font-size:18px;color:#cfcfcf;letter-spacing:1.3px">250%</div>
<!-- window border -->
<div class="a" style="left:0;top:0;width:1080px;height:1px;background:#4a4a4a"></div>
<div class="a" style="left:0;top:0;width:1px;height:676px;background:#555"></div>
<div class="a" style="right:0;top:0;width:1px;height:676px;background:#555"></div>
<div class="a" style="left:0;top:675px;width:1080px;height:1px;background:#333"></div>
</body></html>
